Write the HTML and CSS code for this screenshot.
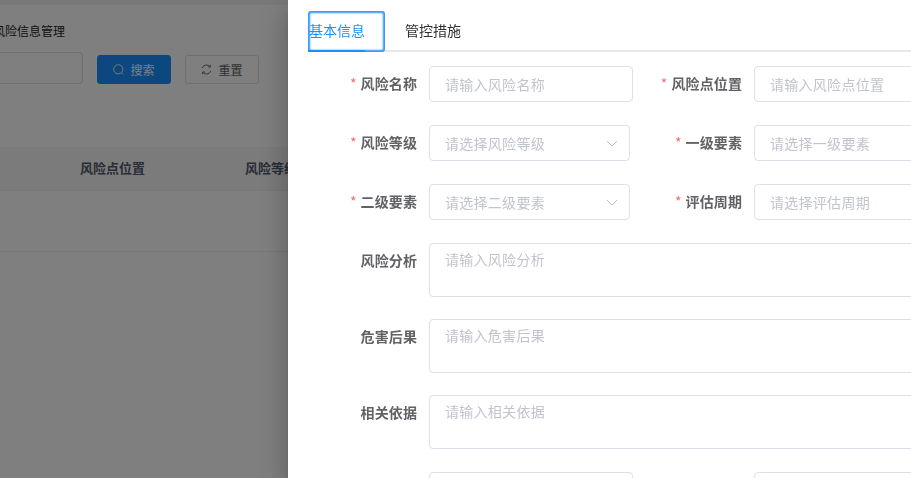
FILE: index.html
```html
<!DOCTYPE html>
<html lang="zh-CN">
<head>
<meta charset="utf-8">
<title>风险信息管理</title>
<link rel="stylesheet" href="styles.css">
</head>
<body>
<div class="page">
  <div class="topbar"></div>
  <div class="crumb">风险信息管理</div>
  <div class="filters">
    <input class="filter-input" type="text">
    <button class="btn btn-primary" type="button">
      <svg class="btn-icon" viewBox="0 0 12 12"><circle cx="5.8" cy="5.8" r="5"/><path d="M9.5 9.5l1.8 1.8"/></svg>
      <span>搜索</span>
    </button>
    <button class="btn" type="button">
      <svg class="btn-icon" viewBox="0 0 12 12"><path d="M1.3 4.4A5 5 0 0 1 9.9 2.9"/><path d="M10.7 7.6A5 5 0 0 1 2.1 9.1"/><path d="M10.2 .9v2.4H7.8"/><path d="M1.8 11.1V8.7h2.4"/></svg>
      <span>重置</span>
    </button>
  </div>
  <div class="thead">
    <div class="th">风险点位置</div>
    <div class="th">风险等级</div>
  </div>
  <div class="trow"></div>
</div>
<div class="overlay"></div>
<aside class="drawer">
  <div class="tabs">
    <div class="tab tab-active">基本信息<span class="tab-bar"></span></div>
    <div class="tab">管控措施</div>
  </div>
  <form class="form">
    <div class="field">
      <label class="label"><span class="star">*</span>风险名称</label>
      <input class="control" type="text" placeholder="请输入风险名称">
    </div>
    <div class="field">
      <label class="label"><span class="star">*</span>风险点位置</label>
      <input class="control" type="text" placeholder="请输入风险点位置">
    </div>
    <div class="field">
      <label class="label"><span class="star">*</span>风险等级</label>
      <div class="select">
        <input class="control" type="text" placeholder="请选择风险等级">
        <svg class="chevron" viewBox="0 0 12 7"><path d="M1 1l5 5 5-5"/></svg>
      </div>
    </div>
    <div class="field">
      <label class="label"><span class="star">*</span>一级要素</label>
      <input class="control" type="text" placeholder="请选择一级要素">
    </div>
    <div class="field">
      <label class="label"><span class="star">*</span>二级要素</label>
      <div class="select">
        <input class="control" type="text" placeholder="请选择二级要素">
        <svg class="chevron" viewBox="0 0 12 7"><path d="M1 1l5 5 5-5"/></svg>
      </div>
    </div>
    <div class="field">
      <label class="label"><span class="star">*</span>评估周期</label>
      <input class="control" type="text" placeholder="请选择评估周期">
    </div>
    <div class="field field-wide">
      <label class="label">风险分析</label>
      <textarea class="control area" placeholder="请输入风险分析"></textarea>
    </div>
    <div class="field field-wide">
      <label class="label">危害后果</label>
      <textarea class="control area" placeholder="请输入危害后果"></textarea>
    </div>
    <div class="field field-wide field-last">
      <label class="label">相关依据</label>
      <textarea class="control area" placeholder="请输入相关依据"></textarea>
    </div>
    <div class="field">
      <label class="label"></label>
      <input class="control" type="text">
    </div>
    <div class="field">
      <label class="label"></label>
      <input class="control" type="text">
    </div>
  </form>
</aside>
</body>
</html>
```

FILE: styles.css
```css
* { box-sizing: border-box; }
html, body { margin: 0; height: 100%; overflow: hidden; background: #fff; }
body { font-family: "Noto Sans CJK SC", "Liberation Sans", sans-serif; }

.page { width: 400px; margin-left: -7px; color: #303133; }
.topbar { height: 4px; background: #f0f0f0; box-shadow: 0 1px 2px rgba(0,0,0,.06); }
.crumb { margin-top: 18px; font-size: 12px; line-height: 17px; color: #1f2329; }
.filters { display: flex; align-items: flex-end; margin-top: 13px; height: 32px; }
.filter-input { width: 90px; height: 32px; border: 1px solid #dcdfe6; border-radius: 4px; background: #fff; margin-right: 14px; }
.btn { display: flex; align-items: center; justify-content: center; gap: 6px; width: 74px; height: 29px; padding: 0; margin-right: 14px; border: 1px solid #dcdfe6; border-radius: 3px; background: #fff; color: #606266; font: 12px "Noto Sans CJK SC", sans-serif; }
.btn-primary { background: #1890ff; border-color: #1890ff; color: #fff; }
.btn-icon { width: 11px; height: 11px; fill: none; stroke: currentColor; stroke-width: 1; }
.thead { display: flex; height: 44px; margin-top: 63px; padding-bottom: 2px; background: #f7f7f7; border-bottom: 1px solid #ebeef5; align-items: center; }
.th { flex: none; width: 165px; font-size: 13px; font-weight: 700; color: #515a6e; }
.th:first-child { margin-left: 87px; }
.trow { height: 61px; border-bottom: 1px solid #ebeef5; }

.overlay { position: fixed; inset: 0; background: rgba(0,0,0,.5); }

.drawer { position: fixed; top: 0; bottom: 0; left: 288px; width: 680px; padding: 11px 0 0 20px; background: #fff; box-shadow: 0 8px 10px -5px rgba(0,0,0,.2), 0 16px 24px 2px rgba(0,0,0,.14), 0 6px 30px 5px rgba(0,0,0,.12); overflow: hidden; }

.tabs { display: flex; height: 41px; border-bottom: 2px solid #e4e7ed; }
.tab { position: relative; height: 41px; padding: 0 20px; font-size: 14px; line-height: 39px; color: #303133; }
.tab-active { padding-left: 1px; color: #1890ff; border-radius: 3px; box-shadow: inset 0 0 2px 2px #2b96ff; }
.tab-bar { position: absolute; left: 0; bottom: 0; width: 57px; height: 2px; background: #1890ff; }

.form { display: grid; grid-template-columns: 325px 325px; row-gap: 23px; margin-top: 14px; }
.field { display: flex; }
.field-wide { grid-column: 1 / 3; margin-bottom: -1px; }
.field-last { margin-bottom: 0; }
.label { flex: none; width: 121px; padding-right: 12px; font-size: 14px; font-weight: 700; line-height: 34px; letter-spacing: .1px; text-align: right; color: #606266; }
.star { margin-right: 4px; color: #f56c6c; font-weight: 400; }
.control { display: block; width: 100%; height: 36px; padding: 0 15px 1px; border: 1px solid #dcdfe6; border-radius: 4px; background: #fff; font: 14px "Noto Sans CJK SC", sans-serif; color: #606266; outline: none; resize: none; }
.control::placeholder { color: #c0c4cc; opacity: 1; letter-spacing: .28px; }
.select { position: relative; flex: none; width: 201px; }
.chevron { position: absolute; top: 15px; right: 12px; width: 12px; height: 7px; fill: none; stroke: #c0c4cc; stroke-width: 1; }
.area { height: 54px; padding: 5px 15px; line-height: 21px; }
```
